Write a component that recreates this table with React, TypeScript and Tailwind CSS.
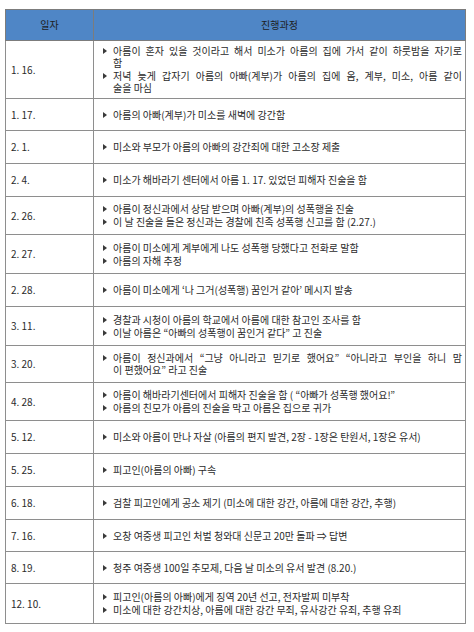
import React from 'react';

type Item = string | string[];
type Row = { date: string; h: string; items: Item[] };

// timeline rows; an array item means the visual lines are fixed (justified like the source doc)
const rows: Row[] = [
  {
    date: '1. 16.',
    h: 'h-[57px]',
    items: [
      ['아름이 혼자 있을 것이라고 해서 미소가 아름의 집에 가서 같이 하룻밤을 자기로', '함'],
      ['저녁 늦게 갑자기 아름의 아빠(계부)가 아름의 집에 옴, 계부, 미소, 아름 같이', '술을 마심'],
    ],
  },
  { date: '1.  17.', h: 'h-[32px]', items: ['아름의 아빠(계부)가 미소를 새벽에 강간함'] },
  { date: '2. 1.', h: 'h-[33px]', items: ['미소와 부모가 아름의 아빠의 강간죄에 대한 고소장 제출'] },
  { date: '2. 4.', h: 'h-[33px]', items: ['미소가 해바라기 센터에서 아름 1. 17. 있었던 피해자 진술을 함'] },
  {
    date: '2. 26.',
    h: 'h-[38px]',
    items: ['아름이 정신과에서 상담 받으며 아빠(계부)의 성폭행을 진술', '이 날 진술을 들은 정신과는 경찰에 친족 성폭행 신고를 함 (2.27.)'],
  },
  {
    date: '2. 27.',
    h: 'h-[39px]',
    items: ['아름이 미소에게 계부에게 나도 성폭행 당했다고 전화로 말함', '아름의 자해 추정'],
  },
  { date: '2. 28.', h: 'h-[33px]', items: ['아름이 미소에게 \u2018나 그거(성폭행) 꿈인거 같아\u2019 메시지 발송'] },
  {
    date: '3. 11.',
    h: 'h-[39px]',
    items: ['경찰과 시청이 아름의 학교에서 아름에 대한 참고인 조사를 함', '이날 아름은 \u201C아빠의 성폭행이 꿈인거 같다\u201D 고 진술'],
  },
  {
    date: '3. 20.',
    h: 'h-[37px]',
    items: [['아름이 정신과에서 \u201C그냥 아니라고 믿기로 했어요\u201D \u201C아니라고 부인을 하니 맘', '이 편했어요\u201D 라고 진술']],
  },
  {
    date: '4. 28.',
    h: 'h-[38px]',
    items: ['아름이 해바라기센터에서 피해자 진술을 함 ( \u201C아빠가 성폭행 했어요!\u201D', '아름의 친모가 아름의 진술을 막고 아름은 집으로 귀가'],
  },
  { date: '5. 12.', h: 'h-[33px]', items: ['미소와 아름이 만나 자살 (아름의 편지 발견, 2장 - 1장은 탄원서, 1장은 유서)'] },
  { date: '5. 25.', h: 'h-[33px]', items: ['피고인(아름의 아빠) 구속'] },
  { date: '6. 18.', h: 'h-[33px]', items: ['검찰 피고인에게 공소 제기 (미소에 대한 강간, 아름에 대한 강간, 추행)'] },
  { date: '7. 16.', h: 'h-[32px]', items: ['오창 여중생 피고인 처벌 청와대 신문고 20만 돌파 \u21D2 답변'] },
  { date: '8. 19.', h: 'h-[32px]', items: ['청주 여중생 100일 추모제, 다음 날 미소의 유서 발견 (8.20.)'] },
  {
    date: '12. 10.',
    h: 'h-[40px]',
    items: ['피고인(아름의 아빠)에게 징역 20년 선고, 전자발찌 미부착', '미소에 대한 강간치상, 아름에 대한 강간 무죄, 유사강간 유죄, 추행 유죄'],
  },
];

const Bullet = () => (
  <span className="flex h-[12px] w-[11px] shrink-0 items-center pl-[1px]">
    <svg width="4" height="6" viewBox="0 0 4 6">
      <path d="M0 0L4 3L0 6Z" fill="#3a3a3a" />
    </svg>
  </span>
);

const ItemText = ({ item }: { item: Item }) => {
  if (typeof item === 'string') return <span className="min-w-0 flex-1">{item}</span>;
  return (
    <span className="flex min-w-0 flex-1 flex-col">
      {item.map((line, i) => (
        <span
          key={i}
          className={i < item.length - 1 ? 'block w-full text-justify [text-align-last:justify]' : 'block'}
        >
          {line}
        </span>
      ))}
    </span>
  );
};

export default function App() {
  return (
    <div className="min-h-[632px] w-[474px] bg-white pl-[5px] pt-[9px] text-[10px] leading-[12px] text-[#2b2b2b] [font-family:'Noto_Sans_CJK_KR','Noto_Sans',sans-serif]">
      <table className="w-[461px] table-fixed border-collapse border border-[#7c7c7c]">
        <colgroup>
          <col className="w-[88px]" />
          <col />
        </colgroup>
        <thead>
          <tr className="h-[31px] bg-[#4f86c6] text-[#1e1e1e]">
            <th className="border border-[#7c7c7c] text-center text-[10px] font-normal">일자</th>
            <th className="border border-[#7c7c7c] text-center text-[10px] font-normal">진행과정</th>
          </tr>
        </thead>
        <tbody>
          {rows.map((row) => (
            <tr key={row.date} className={row.h}>
              <td className="border border-[#8e8e8e] pl-[5px] align-middle">{row.date}</td>
              <td className="border border-[#8e8e8e] py-[4px] pl-[8px] pr-[3px] align-middle">
                <div className="flex flex-col gap-[1px]">
                  {row.items.map((item, i) => (
                    <div key={i} className="flex">
                      <Bullet />
                      <ItemText item={item} />
                    </div>
                  ))}
                </div>
              </td>
            </tr>
          ))}
        </tbody>
      </table>
    </div>
  );
}
